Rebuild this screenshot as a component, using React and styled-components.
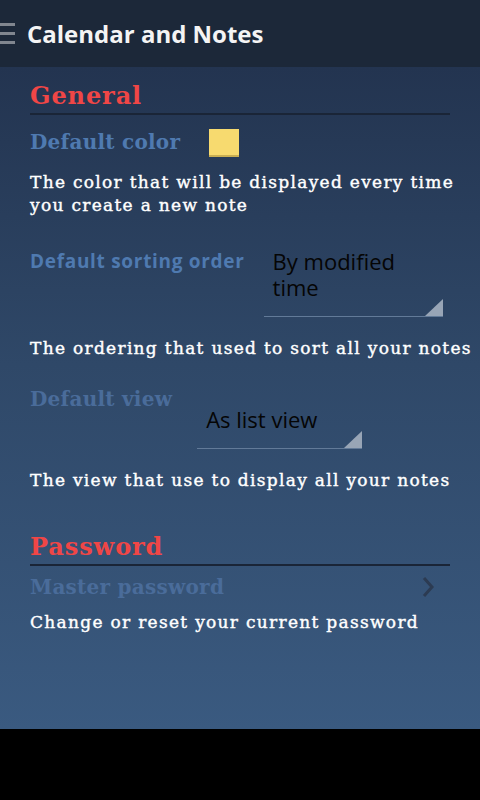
import styled, { createGlobalStyle } from "styled-components";

const GlobalStyle = createGlobalStyle`
  html, body {
    margin: 0;
    padding: 0;
    background: #000;
  }
  * {
    box-sizing: border-box;
  }
`;

const slab = `"DejaVu Serif", "Liberation Serif", serif`;
const sans = `"Open Sans", Roboto, sans-serif`;

const Screen = styled.div`
  width: 480px;
  height: 800px;
  background: #000;
  display: flex;
  flex-direction: column;
  overflow: hidden;
`;

const AppBar = styled.header`
  height: 67px;
  flex-shrink: 0;
  background: #1c2839;
  display: flex;
  align-items: center;
  gap: 12px;
`;

const Burger = styled.div`
  width: 15px;
  display: flex;
  flex-direction: column;
  gap: 6px;

  span {
    display: block;
    height: 3px;
    background: #80868f;
  }
`;

const Title = styled.h1`
  margin: 0;
  font-family: ${sans};
  font-weight: 700;
  font-size: 24px;
  color: #f4f4f4;
`;

const Content = styled.main`
  height: 662px;
  flex-shrink: 0;
  background: linear-gradient(to bottom, #233450 0%, #2f4868 45%, #3a5a80 100%);
  padding: 14px 30px 0 30px;
`;

const SectionHead = styled.h2`
  margin: ${(p) => p.$top || 0}px 0 0 0;
  font-family: ${slab};
  font-weight: 700;
  font-size: 24px;
  letter-spacing: 0.9px;
  line-height: 30px;
  color: #f04646;
  border-bottom: 2px solid #1a2537;
  width: 420px;
  padding-bottom: 2px;
`;

const Row = styled.div`
  display: flex;
  align-items: flex-start;
  gap: ${(p) => p.$gap || 22}px;
  margin-top: ${(p) => p.$top || 0}px;
`;

const Label = styled.div`
  font-family: ${(p) => (p.$sans ? sans : slab)};
  font-weight: 700;
  font-size: ${(p) => (p.$sans ? 19 : 20)}px;
  letter-spacing: ${(p) => (p.$sans ? 0.7 : 0.25)}px;
  line-height: 26px;
  color: ${(p) => (p.$dim ? "#4a6c9a" : "#4f7ab0")};
  white-space: nowrap;
`;

const Swatch = styled.div`
  width: 30px;
  height: 28px;
  background: #f7da6f;
  border-bottom: 2px solid #c9ae52;
`;

const Spinner = styled.div`
  position: relative;
  width: ${(p) => p.$width}px;
  margin-top: ${(p) => p.$top || 0}px;
  padding: 0 20px ${(p) => p.$pad || 10}px 9px;
  border-bottom: 1px solid #627a98;
  font-family: ${sans};
  font-size: 22px;
  line-height: 26px;
  color: #050505;

  &::after {
    content: "";
    position: absolute;
    right: 0;
    bottom: 0;
    width: 0;
    height: 0;
    border-left: 18px solid transparent;
    border-bottom: 17px solid #98a5b6;
  }
`;

const Desc = styled.p`
  margin: ${(p) => p.$top || 0}px 0 0 0;
  font-family: ${slab};
  font-size: 17px;
  letter-spacing: 1.3px;
  line-height: 23px;
  color: #ffffff;
  -webkit-text-stroke: 0.4px #ffffff;
  white-space: ${(p) => (p.$nowrap ? "nowrap" : "normal")};
  width: 440px;
`;

const LinkRow = styled.div`
  display: flex;
  align-items: center;
  justify-content: space-between;
  width: 405px;
  margin-top: 8px;
`;

function Chevron() {
  return (
    <svg width="14" height="22" viewBox="0 0 14 22">
      <path d="M3 2 L11 11 L3 20" fill="none" stroke="#2c3b52" strokeWidth="3" />
    </svg>
  );
}

export default function App() {
  return (
    <>
      <GlobalStyle />
      <Screen>
        <AppBar>
          <Burger>
            <span />
            <span />
            <span />
          </Burger>
          <Title>Calendar and Notes</Title>
        </AppBar>
        <Content>
          <SectionHead>General</SectionHead>

          <Row $top={14} $gap={29}>
            <Label>Default color</Label>
            <Swatch />
          </Row>
          <Desc $top={14}>
            The color that will be displayed every time you create a new note
          </Desc>

          <Row $top={31} $gap={19}>
            <Label $sans>Default sorting order</Label>
            <Spinner $width={179} $pad={16}>
              By modified time
            </Spinner>
          </Row>
          <Desc $top={20} $nowrap>
            The ordering that used to sort all your notes
          </Desc>

          <Row $top={26} $gap={25}>
            <Label $dim>Default view</Label>
            <Spinner $width={165} $top={20} $pad={16}>
              As list view
            </Spinner>
          </Row>
          <Desc $top={20}>The view that use to display all your notes</Desc>

          <SectionHead $top={40}>Password</SectionHead>
          <LinkRow>
            <Label $dim>Master password</Label>
            <Chevron />
          </LinkRow>
          <Desc $top={11}>Change or reset your current password</Desc>
        </Content>
      </Screen>
    </>
  );
}
